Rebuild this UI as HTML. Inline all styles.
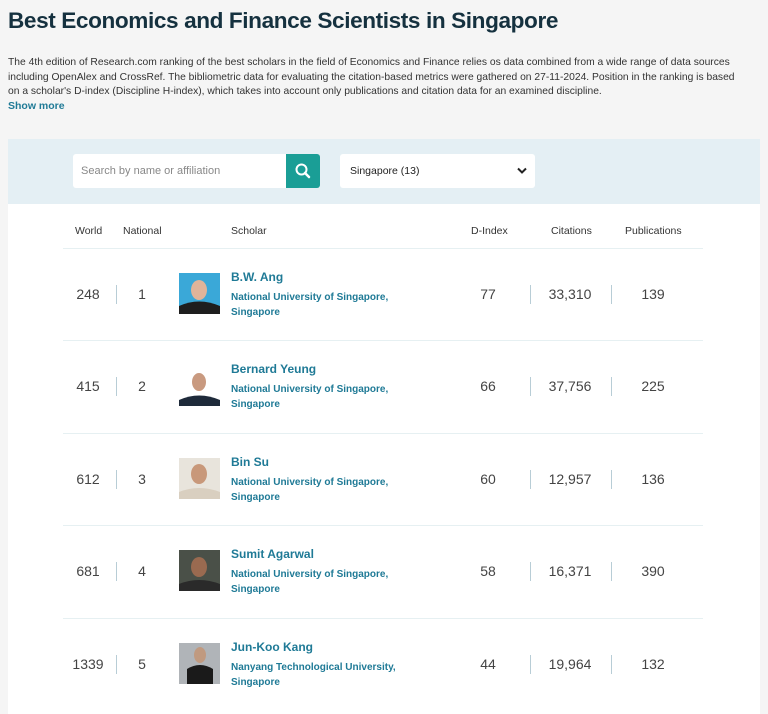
<!DOCTYPE html>
<html><head><style>
*{margin:0;padding:0;box-sizing:border-box}
body{width:768px;height:705px;overflow:hidden;background:#f5f5f5;font-family:"Liberation Sans",sans-serif;color:#333;position:relative}
h1{position:absolute;left:8px;top:8px;font-size:22.6px;font-weight:bold;color:#15313f;letter-spacing:-0.4px}
p{position:absolute;left:8px;top:56px;font-size:10.3px;line-height:14.6px;color:#333;white-space:nowrap}
.sm{position:absolute;left:8px;top:100px;font-size:10.5px;font-weight:bold;color:#1f7a96}
.band{position:absolute;left:8px;top:139px;width:752px;height:65px;background:#e4eff4}
.white{position:absolute;left:8px;top:204px;width:752px;height:510px;background:#fff}
.search{position:absolute;left:73px;top:154px;width:213px;height:34px;background:#fff;border-radius:3px 0 0 3px;font-size:11px;color:#888;padding:11px 8px}
.btn{position:absolute;left:286px;top:154px;width:34px;height:34px;background:#1a9e96;border-radius:0 3px 3px 0}
.sel{position:absolute;left:340px;top:154px;width:195px;height:34px;background:#fff;border-radius:3px;font-size:10.5px;color:#222;padding:11px 10px}
.hd{position:absolute;top:225px;font-size:10.5px;color:#333}
.line{position:absolute;left:63px;width:640px;height:1px;background:#e6f0f2}
.c{position:absolute;font-size:14px;color:#444;text-align:center}
.bar{position:absolute;width:1px;height:19px;background:#b8cdd6}
.ph{position:absolute;left:179px;width:41px;height:41px}
.nm{position:absolute;left:231px;font-size:12px;font-weight:bold;color:#1f7a96}
.af{position:absolute;left:231px;font-size:10px;font-weight:bold;color:#1f7a96;line-height:15px}
</style></head><body>
<h1>Best Economics and Finance Scientists in Singapore</h1>
<p>The 4th edition of Research.com ranking of the best scholars in the field of Economics and Finance relies os data combined from a wide range of data sources<br>including OpenAlex and CrossRef. The bibliometric data for evaluating the citation-based metrics were gathered on 27-11-2024. Position in the ranking is based<br>on a scholar's D-index (Discipline H-index), which takes into account only publications and citation data for an examined discipline.</p>
<div class="sm">Show more</div>
<div class="band"></div>
<div class="white"></div>
<div class="search">Search by name or affiliation</div>
<div class="btn"><svg width="34" height="34" viewBox="0 0 34 34"><circle cx="15.5" cy="15.5" r="5" fill="none" stroke="#fff" stroke-width="2"/><line x1="19" y1="19" x2="23" y2="23" stroke="#fff" stroke-width="2.5" stroke-linecap="round"/></svg></div>
<div class="sel">Singapore (13)<svg style="position:absolute;right:8px;top:13px" width="10" height="8" viewBox="0 0 10 8"><path d="M1 1.5L5 5.5L9 1.5" fill="none" stroke="#222" stroke-width="2"/></svg></div>
<div class="hd" style="left:75px">World</div>
<div class="hd" style="left:123px">National</div>
<div class="hd" style="left:231px">Scholar</div>
<div class="hd" style="left:471px">D-Index</div>
<div class="hd" style="left:551px">Citations</div>
<div class="hd" style="left:625px">Publications</div>
<div class="line" style="top:248px"></div>

<div style="position:absolute;left:0;top:248px;width:768px;height:93px">
<div class="c" style="left:68px;top:38px;width:40px">248</div><div class="bar" style="left:116px;top:37px"></div>
<div class="c" style="left:132px;top:38px;width:20px">1</div>
<svg class="ph" style="top:25px" viewBox="0 0 41 41"><rect width="41" height="41" fill="#3aa8d8"/><ellipse cx="20" cy="17" rx="8" ry="10" fill="#e0b49a"/><path d="M0 41V33Q20 24 41 33V41Z" fill="#1e1e1e"/></svg>
<div class="nm" style="top:22px">B.W. Ang</div>
<div class="af" style="top:42px">National University of Singapore,<br>Singapore</div>
<div class="c" style="left:468px;top:38px;width:40px">77</div><div class="bar" style="left:530px;top:37px"></div>
<div class="c" style="left:540px;top:38px;width:60px">33,310</div><div class="bar" style="left:611px;top:37px"></div>
<div class="c" style="left:633px;top:38px;width:40px">139</div>
</div>
<div class="line" style="top:340px"></div>

<div style="position:absolute;left:0;top:340px;width:768px;height:93px">
<div class="c" style="left:68px;top:38px;width:40px">415</div><div class="bar" style="left:116px;top:37px"></div>
<div class="c" style="left:132px;top:38px;width:20px">2</div>
<svg class="ph" style="top:25px" viewBox="0 0 41 41"><rect width="41" height="41" fill="#fff"/><ellipse cx="20" cy="17" rx="7" ry="9" fill="#c99a80"/><path d="M0 41V35Q20 26 41 35V41Z" fill="#1e2a3a"/></svg>
<div class="nm" style="top:22px">Bernard Yeung</div>
<div class="af" style="top:42px">National University of Singapore,<br>Singapore</div>
<div class="c" style="left:468px;top:38px;width:40px">66</div><div class="bar" style="left:530px;top:37px"></div>
<div class="c" style="left:540px;top:38px;width:60px">37,756</div><div class="bar" style="left:611px;top:37px"></div>
<div class="c" style="left:633px;top:38px;width:40px">225</div>
</div>
<div class="line" style="top:433px"></div>

<div style="position:absolute;left:0;top:433px;width:768px;height:93px">
<div class="c" style="left:68px;top:38px;width:40px">612</div><div class="bar" style="left:116px;top:37px"></div>
<div class="c" style="left:132px;top:38px;width:20px">3</div>
<svg class="ph" style="top:25px" viewBox="0 0 41 41"><rect width="41" height="41" fill="#e8e4dc"/><ellipse cx="20" cy="16" rx="8" ry="10" fill="#c8987a"/><path d="M0 41V34Q20 26 41 34V41Z" fill="#d9cfc0"/></svg>
<div class="nm" style="top:22px">Bin Su</div>
<div class="af" style="top:42px">National University of Singapore,<br>Singapore</div>
<div class="c" style="left:468px;top:38px;width:40px">60</div><div class="bar" style="left:530px;top:37px"></div>
<div class="c" style="left:540px;top:38px;width:60px">12,957</div><div class="bar" style="left:611px;top:37px"></div>
<div class="c" style="left:633px;top:38px;width:40px">136</div>
</div>
<div class="line" style="top:525px"></div>

<div style="position:absolute;left:0;top:525px;width:768px;height:93px">
<div class="c" style="left:68px;top:38px;width:40px">681</div><div class="bar" style="left:116px;top:37px"></div>
<div class="c" style="left:132px;top:38px;width:20px">4</div>
<svg class="ph" style="top:25px" viewBox="0 0 41 41"><rect width="41" height="41" fill="#4a5048"/><ellipse cx="20" cy="17" rx="8" ry="10" fill="#9a6a50"/><path d="M0 41V34Q20 26 41 34V41Z" fill="#2a2a2a"/></svg>
<div class="nm" style="top:22px">Sumit Agarwal</div>
<div class="af" style="top:42px">National University of Singapore,<br>Singapore</div>
<div class="c" style="left:468px;top:38px;width:40px">58</div><div class="bar" style="left:530px;top:37px"></div>
<div class="c" style="left:540px;top:38px;width:60px">16,371</div><div class="bar" style="left:611px;top:37px"></div>
<div class="c" style="left:633px;top:38px;width:40px">390</div>
</div>
<div class="line" style="top:618px"></div>

<div style="position:absolute;left:0;top:618px;width:768px;height:93px">
<div class="c" style="left:68px;top:38px;width:40px">1339</div><div class="bar" style="left:116px;top:37px"></div>
<div class="c" style="left:132px;top:38px;width:20px">5</div>
<svg class="ph" style="top:25px" viewBox="0 0 41 41"><rect width="41" height="41" fill="#b0b4b8"/><ellipse cx="21" cy="12" rx="6" ry="8" fill="#c09a80"/><path d="M8 41V26Q21 18 34 26V41Z" fill="#1a1a1a"/></svg>
<div class="nm" style="top:22px">Jun-Koo Kang</div>
<div class="af" style="top:42px">Nanyang Technological University,<br>Singapore</div>
<div class="c" style="left:468px;top:38px;width:40px">44</div><div class="bar" style="left:530px;top:37px"></div>
<div class="c" style="left:540px;top:38px;width:60px">19,964</div><div class="bar" style="left:611px;top:37px"></div>
<div class="c" style="left:633px;top:38px;width:40px">132</div>
</div>
</body></html>
